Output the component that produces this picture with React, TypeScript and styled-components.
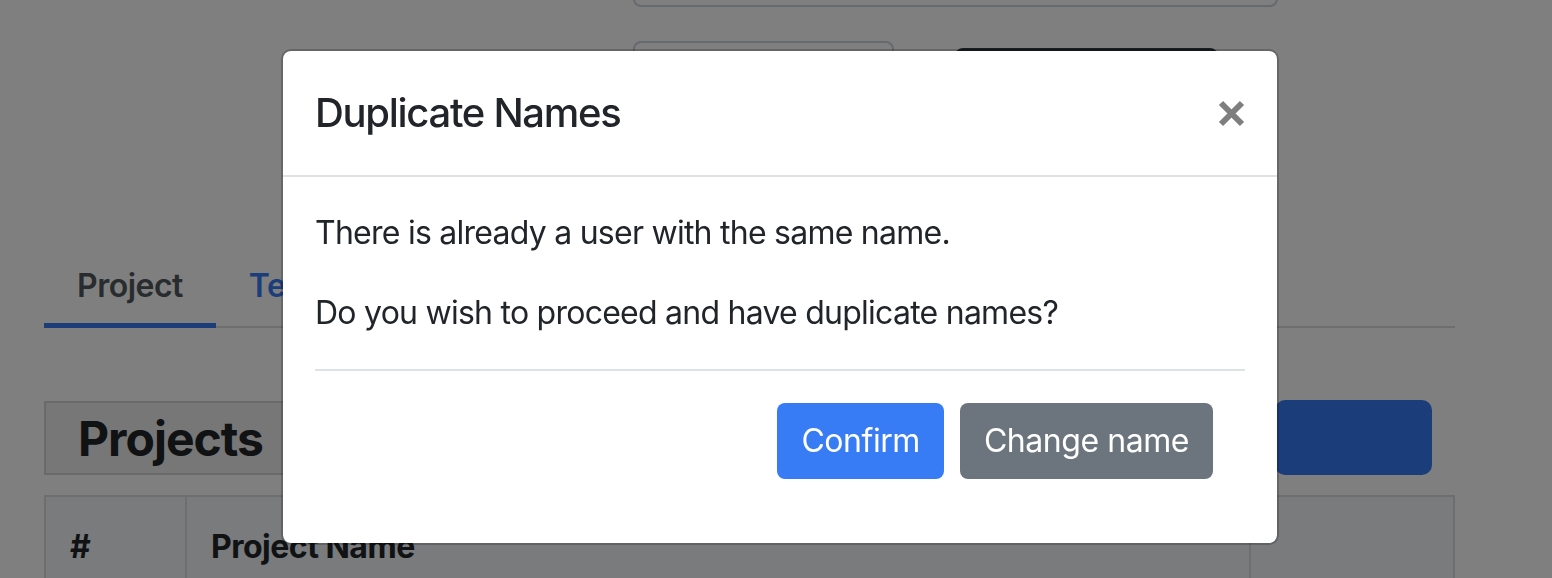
import React from 'react';
import styled, { createGlobalStyle } from 'styled-components';

const GlobalStyle = createGlobalStyle`
  html, body {
    margin: 0;
    padding: 0;
    background: #ffffff;
    overflow: hidden;
    font-family: Inter, "Noto Sans", "Liberation Sans", sans-serif;
    color: #212529;
  }
  * { box-sizing: border-box; }
`;

/* ---------- page under the dialog ---------- */

const Page = styled.div`
  width: 1552px;
  height: 578px;
  padding: 0 97px 0 44px;
  overflow: hidden;
`;

const Form = styled.div`
  margin: -69px 0 0 589px;
  width: 645px;
  display: flex;
  flex-direction: column;
  gap: 34px;
`;

const Input = styled.div<{ $width?: number }>`
  width: ${p => (p.$width ? `${p.$width}px` : '100%')};
  height: 76px;
  border: 2px solid #ced4da;
  border-radius: 8px;
  background: #fff;
`;

const FormRow = styled.div`
  display: flex;
  align-items: flex-start;
  gap: 61px;
`;

const DarkButton = styled.div`
  width: 263px;
  height: 76px;
  margin-top: 7px;
  border-radius: 8px;
  background: #343a40;
`;

const TabList = styled.div`
  margin-top: 128px;
  display: flex;
  border-bottom: 2px solid #dcdcdc;
`;

const Tab = styled.div<{ $active?: boolean }>`
  padding: 10px 33px 13px;
  margin-bottom: -2px;
  font-size: 32px;
  line-height: 48px;
  font-weight: 600;
  letter-spacing: -0.5px;
  color: ${p => (p.$active ? '#53585e' : '#377bf5')};
  border-bottom: 5px solid ${p => (p.$active ? '#377bf5' : 'transparent')};
`;

const HeadingRow = styled.div`
  margin: 72px 23px 0 0;
  display: flex;
  align-items: flex-start;
  gap: 40px;
`;

const HeadingBox = styled.div`
  flex: 1;
  height: 74px;
  margin-top: 1px;
  padding: 0 32px;
  display: flex;
  align-items: center;
  background: #eeeeee;
  border: 2px solid #d4d4d4;
  font-size: 48px;
  font-weight: 700;
  letter-spacing: -1px;
  color: #212529;
`;

const AddButton = styled.div`
  width: 157px;
  height: 75px;
  border-radius: 10px;
  background: #377bf5;
`;

const Table = styled.div`
  margin-top: 20px;
  display: grid;
  grid-template-columns: 139px 1064px 1fr;
  border: 2px solid #dcdcdc;
  border-bottom: none;
`;

const HeadCell = styled.div`
  height: 120px;
  padding: 26px 24px;
  background: #f2f6fb;
  border-left: 2px solid #dcdcdc;
  font-size: 32px;
  line-height: 48px;
  font-weight: 700;
  letter-spacing: -0.5px;
  color: #212529;
  &:first-child { border-left: none; }
`;

/* ---------- modal ---------- */

const Backdrop = styled.div`
  position: fixed;
  inset: 0;
  background: rgba(0, 0, 0, 0.5);
  display: flex;
  justify-content: center;
  align-items: flex-start;
  padding: 49px 0 0 8px;
`;

const Dialog = styled.div`
  width: 998px;
  background: #fff;
  border: 2px solid rgba(0, 0, 0, 0.2);
  border-radius: 10px;
  background-clip: padding-box;
`;

const Header = styled.div`
  display: flex;
  align-items: center;
  justify-content: space-between;
  padding: 32px;
  border-bottom: 2px solid #dee2e6;
`;

const Title = styled.h5`
  margin: 0;
  font-size: 40px;
  line-height: 60px;
  font-weight: 500;
  letter-spacing: -1.3px;
  color: #212529;
`;

const Close = styled.button`
  border: 0;
  background: transparent;
  padding: 0;
  display: flex;
  opacity: 0.5;
  color: #000;
  cursor: pointer;
`;

const Body = styled.div`
  padding: 32px;
`;

const Text = styled.p`
  margin: 0 0 32px;
  font-size: 32px;
  line-height: 48px;
  letter-spacing: -0.75px;
  color: #212529;
`;

const Footer = styled.div`
  display: flex;
  justify-content: flex-end;
  padding: 24px;
  border-top: 2px solid #dee2e6;
`;

const Button = styled.button<{ $variant: 'primary' | 'secondary' }>`
  margin: 8px;
  height: 76px;
  padding: 0 24px;
  border: 0;
  border-radius: 8px;
  font-family: inherit;
  font-size: 32px;
  line-height: 48px;
  letter-spacing: -0.45px;
  color: #fff;
  background: ${p => (p.$variant === 'primary' ? '#377bf5' : '#6c757d')};
`;

const CloseIcon = () => (
	<svg width="27" height="27" viewBox="0 0 27 27">
		<path d="M3 3 L24 24 M24 3 L3 24" stroke="currentColor" strokeWidth="6" />
	</svg>
);

const App: React.FC = () => {
	return (
		<>
			<GlobalStyle />
			<Page>
				<Form>
					<Input />
					<FormRow>
						<Input $width={261} />
						<DarkButton />
					</FormRow>
				</Form>
				<TabList>
					<Tab $active>Project</Tab>
					<Tab>Team</Tab>
				</TabList>
				<HeadingRow>
					<HeadingBox>Projects</HeadingBox>
					<AddButton />
				</HeadingRow>
				<Table>
					<HeadCell>#</HeadCell>
					<HeadCell>Project Name</HeadCell>
					<HeadCell />
				</Table>
			</Page>
			<Backdrop>
				<Dialog>
					<Header>
						<Title>Duplicate Names</Title>
						<Close aria-label="Close"><CloseIcon /></Close>
					</Header>
					<Body>
						<Text>There is already a user with the same name.</Text>
						<Text>Do you wish to proceed and have duplicate names?</Text>
						<Footer>
							<Button $variant="primary">Confirm</Button>
							<Button $variant="secondary">Change name</Button>
						</Footer>
					</Body>
				</Dialog>
			</Backdrop>
		</>
	);
};

export default App;
